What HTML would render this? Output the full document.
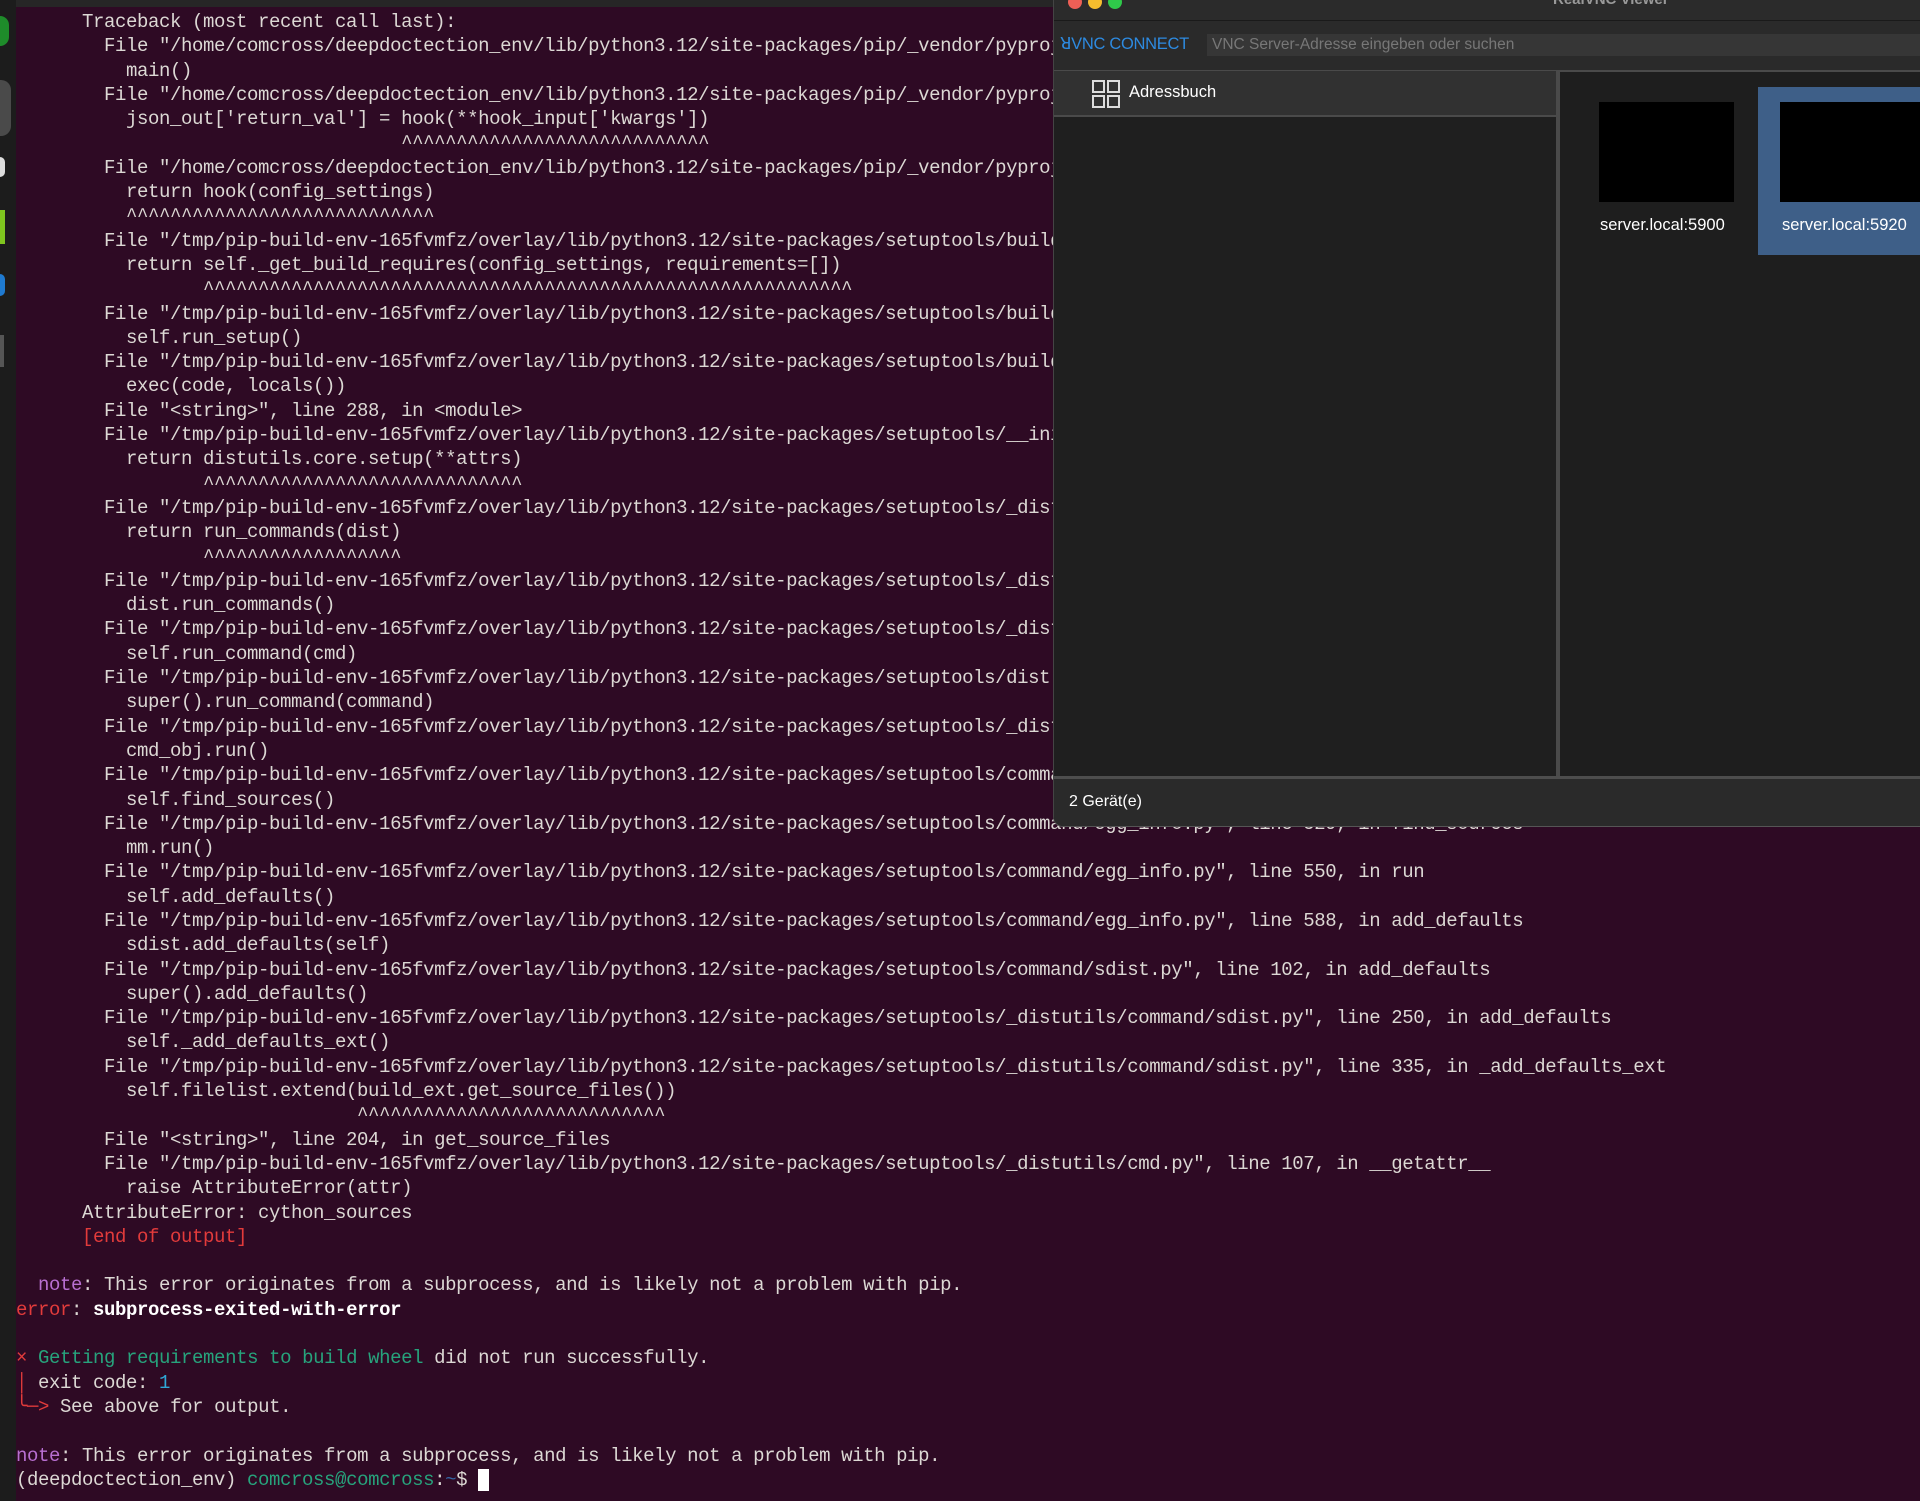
<!DOCTYPE html>
<html><head><meta charset="utf-8"><style>
html,body{margin:0;padding:0;width:1920px;height:1501px;overflow:hidden;background:#2e0a24;}
#dock{position:absolute;left:0;top:0;width:16px;height:1501px;background:#1c1c1c;}
#topbar{position:absolute;left:16px;top:0;width:1904px;height:7px;background:#262626;}
#term{position:absolute;left:16px;top:10px;font-family:"Liberation Mono",monospace;font-size:19px;letter-spacing:-0.4px;line-height:24.3px;color:#dcd8d4;white-space:pre;}
.r{color:#e23b3b}.m{color:#b86fd1}.g{color:#27a37c}.c{color:#2fa7d6}.b{font-weight:bold;color:#fff}.bl{color:#3465a4}
#win{position:absolute;left:1053px;top:0;width:867px;height:826px;background:#1e1e1e;font-family:"Liberation Sans",sans-serif;border-bottom-left-radius:10px;overflow:hidden;border-left:1px solid #444;border-bottom:1px solid #555;}
#title{position:absolute;left:0;top:0;width:867px;height:20px;background:#2b2b2b;color:#999;font-size:15px;font-weight:bold;}
.dot{position:absolute;top:-5px;width:14px;height:14px;border-radius:7px;}
#tool{position:absolute;left:0;top:20px;width:867px;height:49px;background:#2a2a2a;border-top:1px solid #1a1a1a;border-bottom:2px solid #4a4a4a;}
#logo{position:absolute;left:6px;top:13px;color:#2d8ae0;font-size:16.5px;letter-spacing:-0.3px;white-space:nowrap;}
#search{position:absolute;left:153px;top:13px;width:714px;height:22px;background:#363636;color:#777;font-size:15.5px;line-height:22px;padding-left:5px;}
#side{position:absolute;left:0;top:71px;width:502px;height:705px;background:#1f1f1f;border-right:4px solid #4a4a4a;}
#ab{position:absolute;left:0;top:0;width:502px;height:44px;background:#313131;border-bottom:2px solid #4a4a4a;color:#fff;font-size:16.5px;}
#st{position:absolute;left:0;top:776px;width:867px;height:50px;background:#2a2a2a;border-top:3px solid #4d4d4d;color:#fff;font-size:16px;}
.lab{position:absolute;color:#fff;font-size:16.5px;}
</style></head><body>
<div id="dock">
<div style="position:absolute;left:0;top:16px;width:9px;height:30px;background:#1e8c2a;border-radius:0 10px 10px 0"></div>
<div style="position:absolute;left:0;top:80px;width:11px;height:56px;background:#4a4a4a;border-radius:0 10px 10px 0"></div>
<div style="position:absolute;left:0;top:157px;width:5px;height:20px;background:#ddd;border-radius:0 8px 8px 0"></div>
<div style="position:absolute;left:0;top:210px;width:5px;height:34px;background:#7fc51f"></div>
<div style="position:absolute;left:0;top:274px;width:5px;height:22px;background:#1f7ad0;border-radius:0 8px 8px 0"></div>
<div style="position:absolute;left:0;top:335px;width:4px;height:32px;background:#555"></div>
</div>
<div id="topbar"></div>
<div id="term">      Traceback (most recent call last):
        File "/home/comcross/deepdoctection_env/lib/python3.12/site-packages/pip/_vendor/pyproject_hooks/_in_process/_in_process.py", line 353, in &lt;module&gt;
          main()
        File "/home/comcross/deepdoctection_env/lib/python3.12/site-packages/pip/_vendor/pyproject_hooks/_in_process/_in_process.py", line 335, in main
          json_out['return_val'] = hook(**hook_input['kwargs'])
                                   ^^^^^^^^^^^^^^^^^^^^^^^^^^^^
        File "/home/comcross/deepdoctection_env/lib/python3.12/site-packages/pip/_vendor/pyproject_hooks/_in_process/_in_process.py", line 118, in get_requires_for_build_wheel
          return hook(config_settings)
          ^^^^^^^^^^^^^^^^^^^^^^^^^^^^
        File "/tmp/pip-build-env-165fvmfz/overlay/lib/python3.12/site-packages/setuptools/build_meta.py", line 332, in get_requires_for_build_wheel
          return self._get_build_requires(config_settings, requirements=[])
                 ^^^^^^^^^^^^^^^^^^^^^^^^^^^^^^^^^^^^^^^^^^^^^^^^^^^^^^^^^^^
        File "/tmp/pip-build-env-165fvmfz/overlay/lib/python3.12/site-packages/setuptools/build_meta.py", line 302, in _get_build_requires
          self.run_setup()
        File "/tmp/pip-build-env-165fvmfz/overlay/lib/python3.12/site-packages/setuptools/build_meta.py", line 318, in run_setup
          exec(code, locals())
        File "&lt;string&gt;", line 288, in &lt;module&gt;
        File "/tmp/pip-build-env-165fvmfz/overlay/lib/python3.12/site-packages/setuptools/__init__.py", line 117, in setup
          return distutils.core.setup(**attrs)
                 ^^^^^^^^^^^^^^^^^^^^^^^^^^^^^
        File "/tmp/pip-build-env-165fvmfz/overlay/lib/python3.12/site-packages/setuptools/_distutils/core.py", line 183, in setup
          return run_commands(dist)
                 ^^^^^^^^^^^^^^^^^^
        File "/tmp/pip-build-env-165fvmfz/overlay/lib/python3.12/site-packages/setuptools/_distutils/core.py", line 199, in run_commands
          dist.run_commands()
        File "/tmp/pip-build-env-165fvmfz/overlay/lib/python3.12/site-packages/setuptools/_distutils/dist.py", line 954, in run_commands
          self.run_command(cmd)
        File "/tmp/pip-build-env-165fvmfz/overlay/lib/python3.12/site-packages/setuptools/dist.py", line 950, in run_command
          super().run_command(command)
        File "/tmp/pip-build-env-165fvmfz/overlay/lib/python3.12/site-packages/setuptools/_distutils/dist.py", line 973, in run_command
          cmd_obj.run()
        File "/tmp/pip-build-env-165fvmfz/overlay/lib/python3.12/site-packages/setuptools/command/egg_info.py", line 311, in run
          self.find_sources()
        File "/tmp/pip-build-env-165fvmfz/overlay/lib/python3.12/site-packages/setuptools/command/egg_info.py", line 529, in find_sources
          mm.run()
        File "/tmp/pip-build-env-165fvmfz/overlay/lib/python3.12/site-packages/setuptools/command/egg_info.py", line 550, in run
          self.add_defaults()
        File "/tmp/pip-build-env-165fvmfz/overlay/lib/python3.12/site-packages/setuptools/command/egg_info.py", line 588, in add_defaults
          sdist.add_defaults(self)
        File "/tmp/pip-build-env-165fvmfz/overlay/lib/python3.12/site-packages/setuptools/command/sdist.py", line 102, in add_defaults
          super().add_defaults()
        File "/tmp/pip-build-env-165fvmfz/overlay/lib/python3.12/site-packages/setuptools/_distutils/command/sdist.py", line 250, in add_defaults
          self._add_defaults_ext()
        File "/tmp/pip-build-env-165fvmfz/overlay/lib/python3.12/site-packages/setuptools/_distutils/command/sdist.py", line 335, in _add_defaults_ext
          self.filelist.extend(build_ext.get_source_files())
                               ^^^^^^^^^^^^^^^^^^^^^^^^^^^^
        File "&lt;string&gt;", line 204, in get_source_files
        File "/tmp/pip-build-env-165fvmfz/overlay/lib/python3.12/site-packages/setuptools/_distutils/cmd.py", line 107, in __getattr__
          raise AttributeError(attr)
      AttributeError: cython_sources
      <span class="r">[end of output]</span>

  <span class="m">note</span>: This error originates from a subprocess, and is likely not a problem with pip.
<span class="r">error</span>: <span class="b">subprocess-exited-with-error</span>

<span class="r">×</span> <span class="g">Getting requirements to build wheel</span> did not run successfully.
<span class="r">│</span> exit code: <span class="c">1</span>
<span class="r">╰─&gt;</span> See above for output.

<span class="m">note</span>: This error originates from a subprocess, and is likely not a problem with pip.
(deepdoctection_env) <span class="g">comcross@comcross</span>:<span class="bl">~</span>$ <span style="background:#fff">&#160;</span></div>

<div id="win">
<div id="title"><span style="position:absolute;left:499px;top:-9px;">RealVNC Viewer</span>
<div class="dot" style="left:14px;background:#ed5f56"></div>
<div class="dot" style="left:34px;background:#f5bd2e"></div>
<div class="dot" style="left:54px;background:#2fc94a"></div>
</div>
<div id="tool"><div id="logo">ꓤVNC CONNECT</div><div id="search">VNC Server-Adresse eingeben oder suchen</div></div>
<div id="side"><div id="ab">
<svg style="position:absolute;left:38px;top:9px" width="28" height="28" viewBox="0 0 28 28" fill="none" stroke="#ddd" stroke-width="2"><rect x="1" y="1" width="11" height="11"/><rect x="16" y="1" width="11" height="11"/><rect x="1" y="16" width="11" height="11"/><rect x="16" y="16" width="11" height="11"/></svg>
<span style="position:absolute;left:75px;top:12px">Adressbuch</span></div></div>
<div style="position:absolute;left:545px;top:102px;width:135px;height:100px;background:#000"></div>
<div class="lab" style="left:546px;top:216px">server.local:5900</div>
<div style="position:absolute;left:704px;top:87px;width:163px;height:168px;background:#3e5f88"></div>
<div style="position:absolute;left:726px;top:102px;width:141px;height:100px;background:#000"></div>
<div class="lab" style="left:728px;top:216px">server.local:5920</div>
<div id="st"><span style="position:absolute;left:15px;top:14px">2 Gerät(e)</span></div>
</div>
</body></html>
